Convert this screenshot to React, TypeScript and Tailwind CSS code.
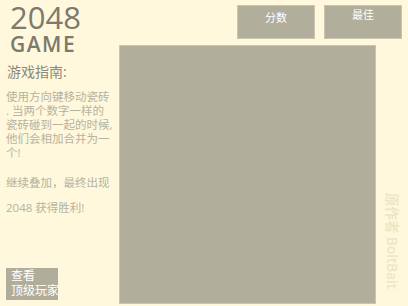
import React from 'react';

const guideLines = [
  '使用方向键移动瓷砖',
  '. 当两个数字一样的',
  '瓷砖碰到一起的时候,',
  '他们会相加合并为一',
  '个!',
];

const ScoreBox = ({ label, lift }: { label: string; lift?: boolean }) => (
  <div
    className={`w-[78px] h-[34px] bg-[#b1ae9b] border border-[#c9c5af] flex justify-center text-[11px] leading-[13px] text-white ${
      lift ? 'pt-[2px]' : 'pt-[5px]'
    }`}
  >
    {label}
  </div>
);

const App = () => {
  return (
    <div
      className="w-[408px] h-[306px] bg-[#fff8dc] flex overflow-hidden"
      style={{ fontFamily: '"Open Sans", "Noto Sans CJK SC", sans-serif' }}
    >
      {/* Left column */}
      <div className="w-[119px] flex flex-col pl-[6px]">
        <div className="pl-[4px] text-[#7d7a6d]">
          <div className="text-[31px] leading-[35px]">2048</div>
          <div className="text-[21px] leading-[18px] tracking-[1.5px] font-semibold">GAME</div>
        </div>
        <div className="mt-[10px] pl-[1px] text-[14px] leading-[18px] text-[#8c897b]">游戏指南:</div>
        <div className="mt-[9px] text-[11.5px] leading-[14px] text-[#b6b3a1] whitespace-nowrap">
          {guideLines.map((l) => (
            <div key={l}>{l}</div>
          ))}
          <div className="mt-[16px]">继续叠加，最终出现</div>
          <div className="mt-[11px]">2048 获得胜利!</div>
        </div>
        <div className="mt-auto mb-[6px] w-[52px] bg-[#b0ad9b] pl-[5px] pb-[2px] text-[12px] leading-[15px] text-white whitespace-nowrap overflow-hidden">
          <div>查看</div>
          <div>顶级玩家</div>
        </div>
      </div>

      {/* Right area */}
      <div className="flex-1 flex flex-col">
        <div className="flex justify-end gap-[9px] pr-[6px] pt-[5px]">
          <ScoreBox label="分数" />
          <ScoreBox label="最佳" lift />
        </div>
        <div className="flex mt-[6px]">
          <div className="w-[257px] h-[259px] bg-[#b1ae9b] border border-[#c9c5af]" />
          <div className="flex-1 flex justify-center pt-[148px]">
            <div className="[writing-mode:vertical-rl] [text-orientation:sideways] text-[13.5px] leading-[16px] text-[#efe6c4] font-semibold">
              原作者 BoltBait
            </div>
          </div>
        </div>
      </div>
    </div>
  );
};

export default App;
